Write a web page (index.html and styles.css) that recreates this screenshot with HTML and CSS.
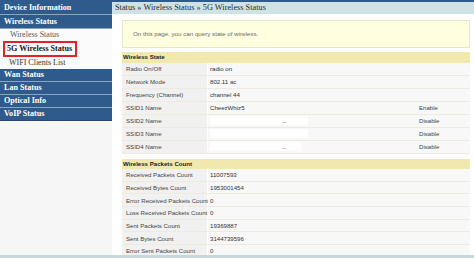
FILE: index.html
```html
<!DOCTYPE html>
<html>
<head>
<meta charset="utf-8">
<link rel="stylesheet" href="styles.css">
</head>
<body>
<div class="page">
  <aside class="side">
    <div class="hdr first">Device Information</div>
    <div class="hdr">Wireless Status</div>
    <div class="subs">
      <div class="sub">Wireless Status</div>
      <div class="sub active"><span class="box">5G Wireless Status</span></div>
      <div class="sub dark">WIFI Clients List</div>
    </div>
    <div class="hdr small">Wan Status</div>
    <div class="hdr small">Lan Status</div>
    <div class="hdr small">Optical Info</div>
    <div class="hdr small last">VoIP Status</div>
    <div class="side-fill"></div>
  </aside>
  <main class="main">
    <div class="crumb">Status » Wireless Status » 5G Wireless Status</div>
    <div class="content">
      <div class="info">On this page, you can query state of wireless.</div>
      <section class="tbl t1">
        <div class="th">Wireless State</div>
        <div class="row"><div class="lab">Radio On/Off</div><div class="val">radio on</div><div class="ext"></div></div>
        <div class="row"><div class="lab">Network Mode</div><div class="val">802.11 ac</div><div class="ext"></div></div>
        <div class="row"><div class="lab">Frequency (Channel)</div><div class="val">channel 44</div><div class="ext"></div></div>
        <div class="row"><div class="lab">SSID1 Name</div><div class="val">CheezWhiz5</div><div class="ext">Enable</div></div>
        <div class="row"><div class="lab">SSID2 Name</div><div class="val"><span class="redact">_</span></div><div class="ext">Disable</div></div>
        <div class="row"><div class="lab">SSID3 Name</div><div class="val"><span class="redact"></span></div><div class="ext">Disable</div></div>
        <div class="row"><div class="lab">SSID4 Name</div><div class="val"><span class="redact short">_</span></div><div class="ext">Disable</div></div>
      </section>
      <section class="tbl t2">
        <div class="th">Wireless Packets Count</div>
        <div class="row"><div class="lab">Received Packets Count</div><div class="val">11007593</div><div class="ext"></div></div>
        <div class="row"><div class="lab">Received Bytes Count</div><div class="val">1953001454</div><div class="ext"></div></div>
        <div class="row"><div class="lab">Error Received Packets Count</div><div class="val">0</div><div class="ext"></div></div>
        <div class="row"><div class="lab">Loss Received Packets Count</div><div class="val">0</div><div class="ext"></div></div>
        <div class="row"><div class="lab">Sent Packets Count</div><div class="val">19369887</div><div class="ext"></div></div>
        <div class="row"><div class="lab">Sent Bytes Count</div><div class="val">3144739596</div><div class="ext"></div></div>
        <div class="row"><div class="lab">Error Sent Packets Count</div><div class="val">0</div><div class="ext"></div></div>
      </section>
    </div>
  </main>
</div>
<div class="strip"></div>
</body>
</html>
```

FILE: styles.css
```css
* { box-sizing: border-box; }
body {
  margin: 0;
  width: 474px;
  height: 258px;
  overflow: hidden;
  background: #fff;
  font-family: "Liberation Sans", Arial, sans-serif;
}
.page {
  display: flex;
  height: 255px;
  overflow: hidden;
}
.side {
  width: 112px;
  flex: none;
  display: flex;
  flex-direction: column;
  background: #f6f6f6;
}
.hdr {
  background: #2e5b8b;
  color: #fff;
  font-family: "Liberation Serif", "Times New Roman", serif;
  font-weight: bold;
  font-size: 8.1px;
  height: 14px;
  line-height: 13px;
  padding-left: 4px;
  border-bottom: 1px solid #8aa5c4;
}
.hdr.first { height: 15px; line-height: 15px; }
.hdr.small { height: 13px; line-height: 12px; }
.hdr.last { border-bottom: 1px solid #24486f; }
.subs {
  display: flex;
  flex-direction: column;
  background: #fbfbfb;
}
.sub {
  height: 12px;
  line-height: 12px;
  padding-left: 10px;
  font-family: "Liberation Serif", "Times New Roman", serif;
  font-size: 8px;
  color: #5a5a5a;
}
.sub.dark { color: #333; padding-left: 9px; }
.sub.active {
  height: 16px;
  padding-left: 3px;
}
.box {
  display: inline-block;
  height: 16px;
  line-height: 12px;
  border: 2px solid #e0232b;
  padding: 0 3px 0 2px;
  font-weight: bold;
  font-size: 8.1px;
  color: #1a1a1a;
}
.side-fill {
  flex: 1;
  background: #f6f6f6;
}
.main {
  flex: 1;
  display: flex;
  flex-direction: column;
}
.crumb {
  height: 14px;
  border-top: 2px solid #2e5b8b;
  background: #cfe3e4;
  font-family: "Liberation Serif", "Times New Roman", serif;
  font-size: 8.3px;
  line-height: 12px;
  padding-left: 3px;
  color: #2b2b2b;
}
.content {
  padding: 6px 4px 0 10px;
}
.info {
  height: 28px;
  border: 1px solid #e7e6cb;
  background: #ffffe0;
  font-size: 6.2px;
  color: #6a6a6a;
  line-height: 26px;
  padding-left: 10px;
}
.tbl { margin-top: 4px; }
.tbl.t2 { margin-top: 5px; }
.th {
  height: 10.5px;
  line-height: 10.5px;
  background: #f1e8ad;
  font-weight: bold;
  font-size: 6.1px;
  color: #222;
  padding-left: 1px;
}
.t2 .th { height: 10.5px; }
.row {
  display: grid;
  grid-template-columns: 86px 208px 1fr;
  height: 13px;
  border-bottom: 1px solid #efeadf;
  font-size: 6.1px;
  color: #444;
}
.t2 .row { height: 12.7px; }
.lab {
  background: #f1f1f1;
  padding-left: 4px;
  display: flex;
  align-items: center;
  border-right: 1px solid #fff;
  white-space: nowrap;
}
.val {
  background: #f8f8f8;
  padding-left: 2px;
  display: flex;
  align-items: center;
  color: #333;
}
.ext {
  background: #f8f8f8;
  padding-left: 3px;
  display: flex;
  align-items: center;
  color: #444;
}
.redact {
  display: block;
  width: 98px;
  height: 9px;
  background: #fff;
  font-size: 6px;
  color: #666;
  text-align: right;
  padding-right: 22px;
  line-height: 8px;
}
.redact.short { width: 91px; padding-right: 15px; }
.strip {
  height: 3px;
  background: #c6d9da;
}
```
